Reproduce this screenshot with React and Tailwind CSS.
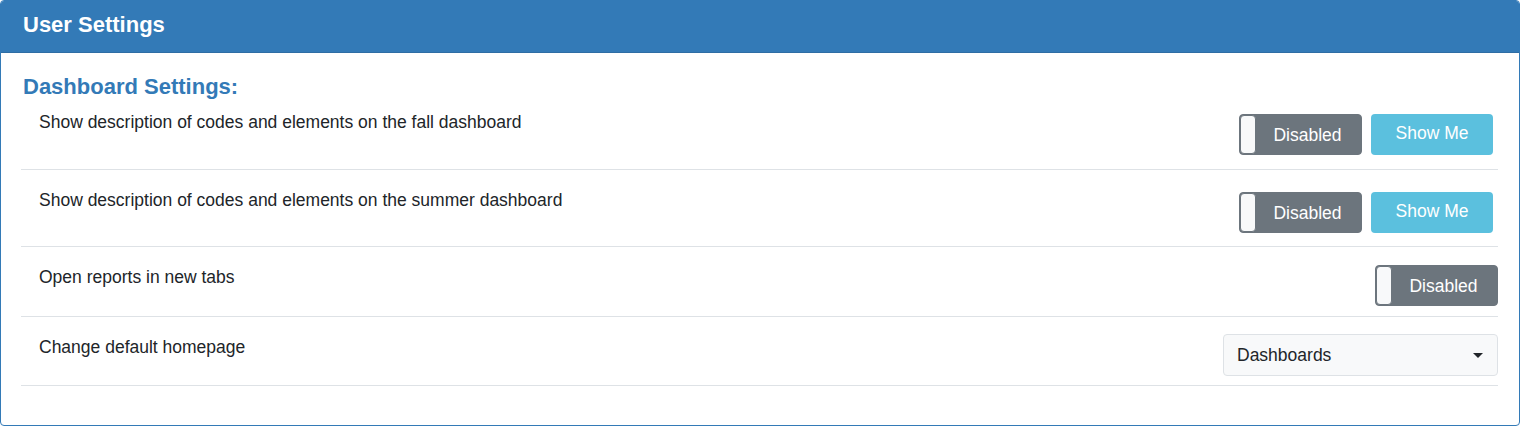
import React, { useState } from "react";

const font = { fontFamily: '"Liberation Sans", Arial, sans-serif' };

const Toggle = ({ on, onClick }) => (
  <button
    type="button"
    onClick={onClick}
    className="relative flex h-[41px] w-[123px] items-center rounded-[4px] border border-[#6c757d] bg-[#6c757d] text-[17.5px] text-white"
  >
    <span className="absolute left-0 top-0 h-full w-[16px] rounded-[4px] border border-[#6c757d] bg-[#f8f9fa]" />
    <span className="w-full pl-[14px] pt-[1px] text-center">{on ? "Enabled" : "Disabled"}</span>
  </button>
);

const ShowMe = () => (
  <button
    type="button"
    className="h-[41px] w-[122px] rounded-[4px] bg-[#5bc0de] pb-[2px] text-[17.5px] text-white"
  >
    Show Me
  </button>
);

const Row = ({ label, children, first, pb = "pb-[9px]" }) => (
  <div
    className={`flex items-start justify-between border-b border-[#dee2e6] pl-[18px] ${
      first ? "pt-[11px]" : "pt-[18px]"
    } ${pb}`}
  >
    <div className="text-[17.5px] leading-[24px] text-[#212529]">{label}</div>
    {children}
  </div>
);

export default function App() {
  const [fall, setFall] = useState(false);
  const [summer, setSummer] = useState(false);
  const [tabs, setTabs] = useState(false);

  return (
    <div style={font} className="w-[1520px] bg-white">
      <div className="overflow-hidden rounded-[4px] border border-[#337ab7]">
        <div className="flex h-[52px] items-center border-b border-[#2e6da4] bg-[#337ab7] pb-[4px] pl-[22px]">
          <h1 className="text-[22px] font-bold text-white">User Settings</h1>
        </div>
        <div className="pl-[20px] pr-[21px] pt-[22px] pb-[39px]">
          <h2 className="pl-[2px] text-[22px] font-bold leading-[24px] text-[#337ab7]">
            Dashboard Settings:
          </h2>
          <Row label="Show description of codes and elements on the fall dashboard" first pb="pb-[10px]">
            <div className="my-[4px] mr-[5px] flex gap-[9px]">
              <Toggle on={fall} onClick={() => setFall(!fall)} />
              <ShowMe />
            </div>
          </Row>
          <Row label="Show description of codes and elements on the summer dashboard">
            <div className="my-[4px] mr-[5px] flex gap-[9px]">
              <Toggle on={summer} onClick={() => setSummer(!summer)} />
              <ShowMe />
            </div>
          </Row>
          <Row label="Open reports in new tabs" pb="pb-[10px]">
            <Toggle on={tabs} onClick={() => setTabs(!tabs)} />
          </Row>
          <Row label="Change default homepage" pb="pb-[9px]">
            <div className="-mt-[1px] flex h-[42px] w-[275px] items-center justify-between rounded-[4px] border border-[#dee2e6] bg-[#f8f9fa] pl-[13px] pr-[14px] text-[17.5px] text-[#212529]">
              <span>Dashboards</span>
              <svg width="10" height="5" viewBox="0 0 10 5">
                <path d="M0 0h10L5 5z" fill="#212529" />
              </svg>
            </div>
          </Row>
        </div>
      </div>
    </div>
  );
}
